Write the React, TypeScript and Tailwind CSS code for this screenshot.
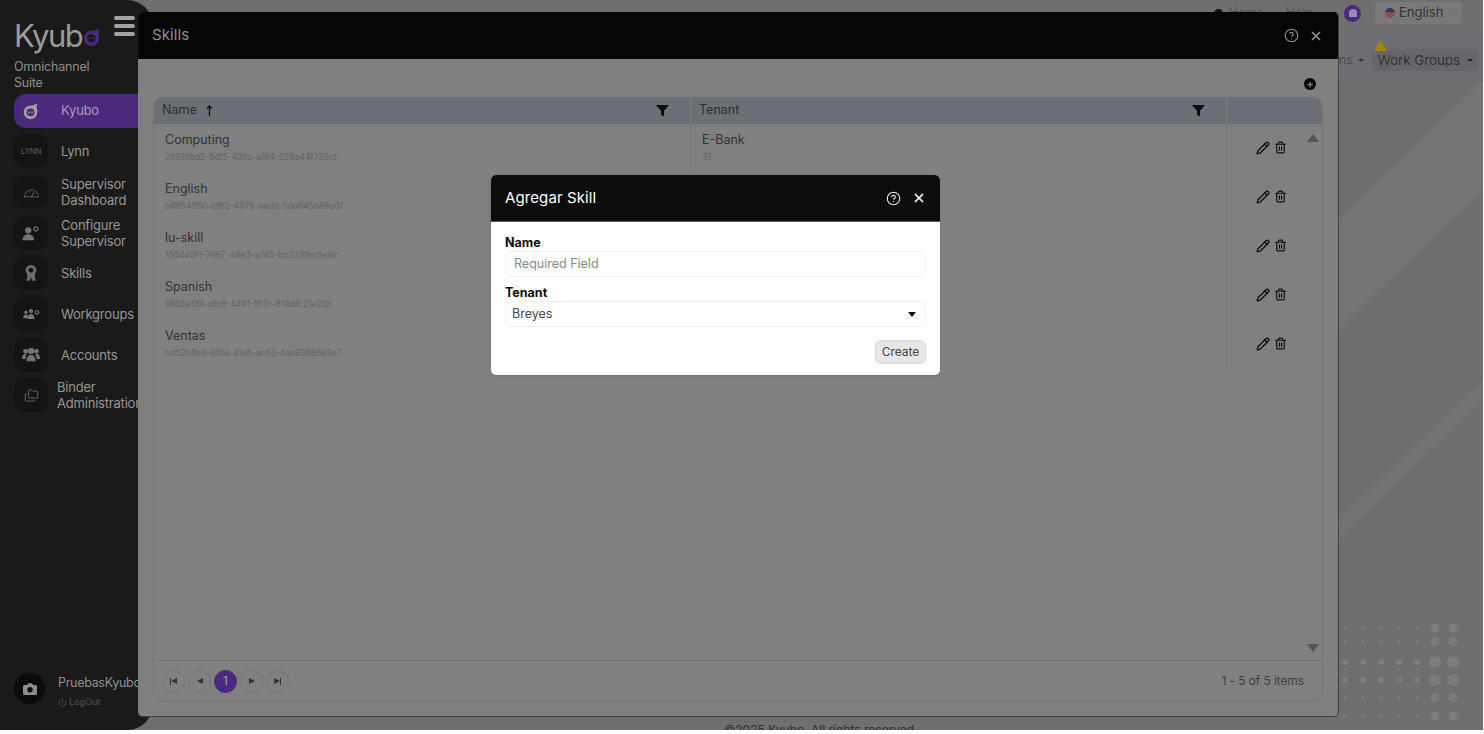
import { ChevronDown, CircleHelp, Folders, Pencil, Power, Trash2, X } from "lucide-react";
import type { ReactNode } from "react";

const rows = [
  { name: "Computing", id: "28918bd2-6df5-436c-a194-026a44f735cf" },
  { name: "English", id: "b9954050-bfb2-4879-aedd-5da645b89e0f" },
  { name: "lu-skill", id: "150440f1-7667-48e3-a745-bc2231bc5e8c" },
  { name: "Spanish", id: "960be5f4-dfc8-4491-8f7c-814dfc21e20b" },
  { name: "Ventas", id: "bd52b8e8-9f0e-41a6-ac63-4ae93686e5a7" },
];

function Funnel() {
  return (
    <svg className="w-[13px] h-[13px]" viewBox="0 0 14 14" fill="#0c0c0c">
      <path d="M0 1h14L8.6 7.2V13.5L5.4 11.5V7.2z" />
    </svg>
  );
}

function KyuboMark({ className, body, eye }: { className: string; body: string; eye: string }) {
  return (
    <svg className={className} viewBox="0 0 20 20">
      <path d="M10 3c3 0 5-1 8-2-.6 2-1 3-.6 5 .4 1 .6 3 .6 4.500A8 8 0 1 1 10 3z" fill={body} />
      <circle cx="10" cy="11" r="4.600" fill={eye} />
      <circle cx="8.200" cy="11" r="1.100" fill={body} />
      <circle cx="11.800" cy="11" r="1.100" fill={body} />
    </svg>
  );
}

function NavIcon({ children }: { children: ReactNode }) {
  return (
    <span className="flex items-center justify-center w-[34px] h-[34px] rounded-[11px] bg-[#141414] text-[#6e6e6e] shrink-0">
      {children}
    </span>
  );
}

function NavItem({ icon, lines, indent = "ml-[13px]" }: { icon: ReactNode; lines: string[]; indent?: string }) {
  return (
    <div className="flex items-center h-[40.700px] pl-[14px]">
      <NavIcon>{icon}</NavIcon>
      <div className={`${indent} text-[13px] leading-[16px] tracking-[-0.2px] text-[#979797]`}>
        {lines.map((l) => (
          <div key={l}>{l}</div>
        ))}
      </div>
    </div>
  );
}

function Sidebar() {
  return (
    <aside className="relative w-[153px] h-full shrink-0 rounded-r-[26px] bg-[#1a1a1a] flex flex-col overflow-hidden">
      <div className="flex items-start pl-[14px] pt-[14px] h-[94px]">
        <div>
          <div className="flex items-center h-[42px]">
            <span className="text-[31px] leading-none tracking-[-1.500px] text-[#9b9b9b]">Kyub</span>
            <svg className="w-[17px] h-[17px] ml-[1px] mt-[4px]" viewBox="0 0 20 20">
              <path d="M10 2c3 0 6-1 9-2-.6 3-1 4-.8 6 .6 1.400.8 3 .8 5a9 9 0 1 1-9-9z" fill="#4a2a7c" />
              <circle cx="10" cy="11" r="4.800" fill="#1a1a1a" />
              <circle cx="8" cy="11" r="1.200" fill="#4a2a7c" />
              <circle cx="12" cy="11" r="1.200" fill="#4a2a7c" />
            </svg>
          </div>
          <div className="mt-[3px] text-[12.500px] leading-[16px] tracking-[-0.200px] text-[#8f8f8f]">Omnichannel Suite</div>
        </div>
        <div className="ml-auto mr-[18px] mt-[2px] flex flex-col gap-[4px]">
          <span className="block w-[21px] h-[4px] rounded-full bg-[#a2a2a2]" />
          <span className="block w-[21px] h-[4px] rounded-full bg-[#a2a2a2]" />
          <span className="block w-[21px] h-[4px] rounded-full bg-[#a2a2a2]" />
        </div>
      </div>

      <div className="flex items-center h-[34px] ml-[14px] rounded-l-[12px] bg-[#4b2a7d] mb-[3px]">
        <KyuboMark className="w-[17px] h-[17px] ml-[8px] shrink-0" body="#9f9f9f" eye="#4b2a7d" />
        <span className="ml-[22px] text-[13px] tracking-[-0.200px] text-[#a99ac0]">Kyubo</span>
      </div>

      <NavItem
        icon={<span className="text-[8px] tracking-[-0.300px] text-[#5f5f5f]">LYNN</span>}
        lines={["Lynn"]}
      />
      <NavItem
        icon={
          <svg className="w-[17px] h-[17px]" viewBox="0 0 20 20" fill="none" stroke="#5a5a5a" strokeWidth="1.600">
            <path d="M2 15a8 8 0 0 1 16 0z" strokeDasharray="2 1" />
            <path d="M10 15l3-5" />
          </svg>
        }
        lines={["Supervisor", "Dashboard"]}
      />
      <NavItem
        icon={
          <svg className="w-[18px] h-[18px]" viewBox="0 0 20 20" fill="#747474">
            <circle cx="7" cy="7" r="3.500" />
            <path d="M0.500 18c0-4 3-6.500 6.500-6.500s6.500 2.500 6.500 6.500z" />
            <circle cx="15.500" cy="5.500" r="2.300" fill="none" stroke="#747474" strokeWidth="1.800" strokeDasharray="2 .6" />
          </svg>
        }
        lines={["Configure", "Supervisor"]}
      />
      <NavItem
        icon={
          <svg className="w-[16px] h-[18px]" viewBox="0 0 16 20" fill="#6e6e6e">
            <path d="M4 11l-1 8 2.500-1 1 1.500 1.500-5 1.500 5 1-1.500 2.500 1-1-8z" />
            <circle cx="8" cy="7" r="6" />
            <circle cx="8" cy="7" r="2.700" fill="#141414" />
          </svg>
        }
        lines={["Skills"]}
      />
      <NavItem
        icon={
          <svg className="w-[17px] h-[14px]" viewBox="0 0 20 14" fill="#747474">
            <circle cx="3.500" cy="5" r="2" />
            <circle cx="9.500" cy="3.500" r="2.500" />
            <path d="M0 12c0-3 1.500-4.500 3.500-4.500S7 9 7 12zM5.500 13c0-4 1.800-6 4-6s4 2 4 6z" />
            <circle cx="16.500" cy="5" r="2.200" fill="none" stroke="#747474" strokeWidth="1.300" />
          </svg>
        }
        lines={["Workgroups"]}
      />
      <NavItem
        icon={
          <svg className="w-[18px] h-[15px]" viewBox="0 0 20 16" fill="#747474">
            <circle cx="4" cy="4.500" r="2.700" />
            <circle cx="16" cy="4.500" r="2.700" />
            <circle cx="10" cy="4" r="3.500" />
            <path d="M0 12c0-3 1.500-4.500 3.500-4.500h1.800C4 9 4 11 4 13H0.500zM20 12c0-3-1.500-4.500-3.500-4.500h-1.800C16 9 16 11 16 13h3.500zM5 15.500c0-5 2-7 5-7s5 2 5 7z" />
          </svg>
        }
        lines={["Accounts"]}
      />
      <NavItem
        icon={<Folders className="w-[15px] h-[15px]" strokeWidth={1.5} />}
        lines={["Binder", "Administration"]}
        indent="ml-[9px]"
      />

      <div className="mt-auto mb-[22px] ml-[14px] flex items-center">
        <span className="flex items-center justify-center w-[31px] h-[31px] rounded-full bg-[#0b0b0b]">
          <svg className="w-[14px] h-[12px]" viewBox="0 0 14 12" fill="#8c8c8c">
            <path d="M1.500 2H4L5 .3h4L10 2h2.500A1.500 1.500 0 0 1 14 3.500v7a1.500 1.500 0 0 1-1.500 1.500h-11A1.500 1.500 0 0 1 0 10.500v-7A1.500 1.500 0 0 1 1.500 2zM7 4a2.700 2.700 0 1 0 0 5.400A2.700 2.700 0 0 0 7 4z" fillRule="evenodd" />
          </svg>
        </span>
        <div className="ml-[13px] mt-[6px]">
          <div className="text-[12.500px] leading-[16px] tracking-[-0.300px] text-[#8f8f8f] whitespace-nowrap">PruebasKyubo</div>
          <div className="mt-[5px] flex items-center gap-[2px] text-[9px] leading-[12px] text-[#505050]">
            <Power className="w-[9px] h-[9px]" strokeWidth={2} />
            LogOut
          </div>
        </div>
      </div>
    </aside>
  );
}

function Backdrop() {
  const dotRows = [628, 642, 662, 680, 698, 716];
  const dotCols = [1346, 1364, 1382, 1400, 1418, 1436, 1454];
  return (
    <div className="relative flex-1 h-full bg-[#6f6f6f] overflow-hidden">
      <svg className="absolute inset-0 w-full h-full" viewBox="153 0 1331 730" preserveAspectRatio="none">
        <path d="M1339 330L1484 190V80L1339 220z" fill="#747474" />
        <path d="M1339 540L1484 400V380L1339 520z" fill="#737373" />
        {dotRows.flatMap((y, r) =>
          dotCols.map((x, c) => (
            <circle key={`${r}-${c}`} cx={x} cy={y} r={(r >= 2 && r <= 3 ? 3 : 1.500) + (c >= 5 ? 3 : 0)} fill="#7d7d7d" />
          )),
        )}
      </svg>
      <div className="relative flex justify-end items-center h-[25px] pt-[1px] pr-[21px] text-[12.500px] text-[#4f4f4f]">
        <span className="w-[9px] h-[9px] rounded-full bg-[#111] mr-[6px]" />
        <span className="mr-[22px]">Home</span>
        <span className="mr-[31px]">Help</span>
        <span className="flex items-center justify-center w-[17px] h-[17px] rounded-full bg-[#4b2a7d] mr-[14px]">
          <span className="w-[8px] h-[8px] rounded-t-full bg-[#9b8ab5]" />
        </span>
        <span className="flex items-center h-[22px] w-[87px] px-[10px] rounded-[4px] bg-[#797979] text-[13px] text-[#333]">
          <span className="w-[10px] h-[10px] rounded-full bg-[linear-gradient(#2c3a66_45%,#8a4d57_45%)] mr-[4px] shrink-0" />
          English
          <ChevronDown className="w-[11px] h-[11px] ml-[5px]" />
        </span>
      </div>
      <div className="relative mt-[13px] h-[44px] bg-[#6d6e74] flex justify-end items-center pr-[5px] text-[#333]">
        <span className="text-[12px] text-[#4b4b4b]">ns</span>
        <span className="ml-[6px] mr-[8px] border-x-[3px] border-t-[3px] border-x-transparent border-t-[#333]" />
        <span className="relative flex items-center h-[22px] px-[5px] rounded-[4px] bg-[#66676d] text-[13.500px] tracking-[-0.100px]">
          <svg className="absolute -top-[9px] left-[2px] w-[13px] h-[11px]" viewBox="0 0 13 11" fill="#a88212">
            <path d="M6.500 0L13 11H0z" />
          </svg>
          Work Groups
          <span className="ml-[7px] border-x-[3px] border-t-[3px] border-x-transparent border-t-[#222]" />
        </span>
      </div>
      <div className="absolute left-0 right-0 bottom-[-7px] text-center pr-[-10px] text-[12px] leading-[14px] text-[#2e2e2e]">
        <span className="ml-[6px]">©2025 Kyubo. All rights reserved.</span>
      </div>
    </div>
  );
}

function PageButton({ children, active }: { children: ReactNode; active?: boolean }) {
  return (
    <span
      className={`flex items-center justify-center w-[23px] h-[23px] rounded-full border text-[12px] ${
        active ? "bg-[#4b2a7d] border-[#4b2a7d] text-[#a99ac0]" : "border-[#757575] text-[#333]"
      }`}
    >
      {children}
    </span>
  );
}

function Triangle({ dir }: { dir: "left" | "right" }) {
  return dir === "left" ? (
    <span className="border-y-[3.500px] border-r-[6px] border-y-transparent border-r-[#333]" />
  ) : (
    <span className="border-y-[3.500px] border-l-[6px] border-y-transparent border-l-[#333]" />
  );
}

function SkillsWindow() {
  return (
    <section className="absolute left-[138px] top-[12px] w-[1201px] h-[705px] flex flex-col rounded-[5px] bg-[#808080] border-r border-b border-[#3f3f3f] overflow-hidden">
      <header className="flex items-center h-[47px] shrink-0 bg-[#060606] pl-[14px] pr-[15px] text-[#8f8f8f]">
        <span className="text-[15px] tracking-[0.100px]">Skills</span>
        <CircleHelp className="ml-auto w-[15px] h-[15px]" strokeWidth={1.8} />
        <X className="ml-[10px] w-[14px] h-[14px]" strokeWidth={3} />
      </header>

      <div className="flex justify-end h-[38px] shrink-0 pr-[22px] pt-[19px]">
        <span className="flex items-center justify-center w-[12px] h-[12px] rounded-full bg-[#050505] text-[#808080]">
          <span className="text-[11px] leading-[11px] font-bold">+</span>
        </span>
      </div>

      <div className="flex flex-col mx-[15px] h-[605px] rounded-[10px] border border-t-0 border-[#747474] overflow-hidden">
        <div className="flex h-[27px] shrink-0 bg-[#6c7076] border-b border-[#6e7278] text-[12.500px] text-[#2d2d2d]">
          <div className="flex items-center w-[537px] border-r border-[#7d8084] pl-[8px] pr-[21px]">
            Name
            <svg className="ml-[9px] w-[7px] h-[11px]" viewBox="0 0 7 11" fill="none" stroke="#0c0c0c" strokeWidth="1.300">
              <path d="M3.500 11V1M1 3.500L3.500 1 6 3.500" />
            </svg>
            <span className="ml-auto"><Funnel /></span>
          </div>
          <div className="flex items-center w-[536px] border-r border-[#7d8084] pl-[8px] pr-[21px]">
            Tenant
            <span className="ml-auto"><Funnel /></span>
          </div>
          <div className="flex-1" />
        </div>

        <div className="flex-1 relative">
          {rows.map((row) => (
            <div key={row.id} className="flex h-[49px] w-[1151px] last:border-b last:border-[#6f7074] last:h-[50px]">
              <div className="w-[537px] border-r border-[#74777b] pl-[11px] pt-[8px]">
                <div className="text-[12.500px] leading-[16px] text-[#333]">{row.name}</div>
                <div className="mt-[3px] text-[8.500px] leading-[12px] text-[#646464]">{row.id}</div>
              </div>
              <div className="w-[536px] border-r border-[#74777b] pl-[11px] pt-[8px]">
                <div className="text-[12.500px] leading-[16px] text-[#333]">E-Bank</div>
                <div className="mt-[3px] text-[8.500px] leading-[12px] text-[#646464]">31</div>
              </div>
              <div className="flex flex-1 items-center justify-center gap-[4px] pl-[10px] pb-[2px] text-[#111]">
                <Pencil className="w-[14px] h-[14px]" strokeWidth={2.4} />
                <Trash2 className="w-[13px] h-[13px]" strokeWidth={2.2} />
              </div>
            </div>
          ))}
          <span className="absolute right-[3px] top-[10px] border-x-[6px] border-b-[8px] border-x-transparent border-b-[#555]" />
          <span className="absolute right-[3px] bottom-[8px] border-x-[6px] border-t-[8px] border-x-transparent border-t-[#555]" />
        </div>

        <div className="flex items-center h-[41px] shrink-0 border-t border-[#6f6f6f] pl-[8px] pr-[18px]">
          <div className="flex items-center gap-[3px]">
            <PageButton>
              <span className="w-[1.500px] h-[7px] bg-[#333]" />
              <Triangle dir="left" />
            </PageButton>
            <PageButton>
              <Triangle dir="left" />
            </PageButton>
            <PageButton active>1</PageButton>
            <PageButton>
              <Triangle dir="right" />
            </PageButton>
            <PageButton>
              <Triangle dir="right" />
              <span className="w-[1.500px] h-[7px] bg-[#333]" />
            </PageButton>
          </div>
          <span className="ml-auto text-[12px] tracking-[-0.100px] text-[#3f3f3f]">1 - 5 of 5 items</span>
        </div>
      </div>
    </section>
  );
}

function AddSkillDialog() {
  return (
    <section className="absolute left-[491px] top-[175px] w-[449px] h-[200px] rounded-[5px] bg-white overflow-hidden shadow-sm">
      <header className="flex items-center h-[47px] bg-[#0d0d0d] border-b border-[#555] pl-[14px] pr-[14px] text-white">
        <span className="text-[15px] tracking-[0.100px]">Agregar Skill</span>
        <CircleHelp className="ml-auto w-[15px] h-[15px] text-[#e5e5e5]" strokeWidth={1.8} />
        <X className="ml-[11px] w-[14px] h-[14px]" strokeWidth={3} />
      </header>
      <div className="flex flex-col px-[14px] pt-[14px]">
        <label className="text-[12.500px] leading-[14px] font-bold text-[#0d0d0d]">Name</label>
        <div className="mt-[1px] flex items-center h-[26px] pl-[8px] rounded-[7px] border border-[#eeeeee] text-[12.500px] text-[#8a8a8a]">
          Required Field
        </div>
        <label className="mt-[9px] text-[12.500px] leading-[14px] font-bold text-[#0d0d0d]">Tenant</label>
        <div className="mt-[1px] flex items-center justify-between h-[26px] pl-[6px] pr-[9px] rounded-[7px] border border-[#eeeeee] text-[12.500px] text-[#4a4a4a]">
          Breyes
          <span className="border-x-[4px] border-t-[5px] border-x-transparent border-t-[#111]" />
        </div>
        <div className="flex justify-end mt-[13px]">
          <button className="w-[51px] h-[24px] rounded-[6px] border border-[#d9d9d9] bg-[#e6e6e6] text-[12px] text-[#444]">
            Create
          </button>
        </div>
      </div>
    </section>
  );
}

export default function App() {
  return (
    <div className="relative w-[1484px] h-[734px] bg-white overflow-hidden font-['Inter',sans-serif]">
      <div className="flex w-[1483px] h-[730px] overflow-hidden bg-[#6f6f6f]">
        <Sidebar />
        <Backdrop />
      </div>
      <SkillsWindow />
      <AddSkillDialog />
    </div>
  );
}
